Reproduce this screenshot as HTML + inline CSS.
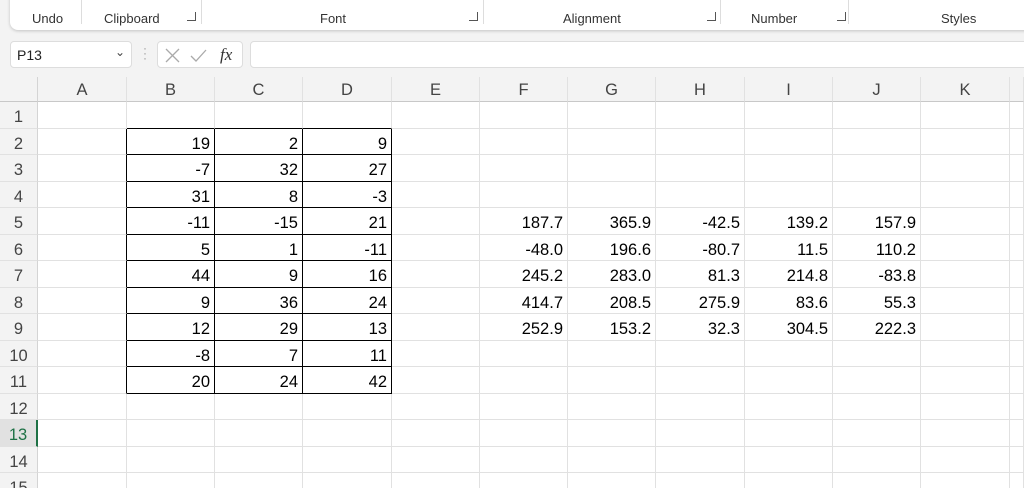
<!DOCTYPE html><html><head><style>
*{margin:0;padding:0;box-sizing:border-box}
html,body{width:1024px;height:488px;overflow:hidden}
body{background:#f3f3f3;font-family:"Liberation Sans",sans-serif;position:relative}
.rib{position:absolute;left:10px;top:-10px;width:1030px;height:40px;background:#fff;border-radius:8px;box-shadow:0 1px 3px rgba(0,0,0,.2)}
.rl{position:absolute;top:11px;font-size:13px;color:#333}
.sep{position:absolute;top:0;width:1px;height:24px;background:#ddd}
.dl{position:absolute;top:12px;width:9px;height:9px;border:1px solid #555;border-top:none;border-left:none}
.box{position:absolute;background:#fff;border:1px solid #ddd;border-radius:4px}
.sheet{position:absolute;left:0;top:77px;width:1024px;height:411px;background:#fff;overflow:hidden}
.row{position:absolute;left:0;width:1024px;display:grid;grid-template-columns:38px 89px 88px 88px 89px 88px 88px 88px 89px 88px 88px 89px 14px}
.row div{border-right:1px solid #e1e1e1;border-bottom:1px solid #e1e1e1;font-size:16.5px;text-align:right;padding-right:4px;color:#000;white-space:nowrap;overflow:hidden;line-height:30px}
.row div:first-child{background:#f3f3f3;text-align:center;padding:0;color:#444;border-right:1px solid #d4d4d4}
.hd div{background:#f3f3f3;text-align:center!important;color:#444;padding:0!important;border-bottom:1px solid #c8c8c8!important;line-height:26px!important}
.b{border-right:1px solid #000!important;border-bottom:1px solid #000!important}
.bt{border-bottom:1px solid #000!important}
.br{border-right:1px solid #000!important}
</style></head><body>
<div class="rib">
<div class="rl" style="left:22px;top:21px">Undo</div>
<div class="sep" style="left:71px;top:10px"></div>
<div class="rl" style="left:94px;top:21px">Clipboard</div>
<div class="dl" style="left:177px;top:22px"></div>
<div class="sep" style="left:191px;top:10px"></div>
<div class="rl" style="left:310px;top:21px">Font</div>
<div class="dl" style="left:459px;top:22px"></div>
<div class="sep" style="left:473px;top:10px"></div>
<div class="rl" style="left:553px;top:21px">Alignment</div>
<div class="dl" style="left:697px;top:22px"></div>
<div class="sep" style="left:710px;top:10px"></div>
<div class="rl" style="left:741px;top:21px">Number</div>
<div class="dl" style="left:827px;top:22px"></div>
<div class="sep" style="left:838px;top:10px"></div>
<div class="rl" style="left:931px;top:21px">Styles</div>
</div>
<div class="box" style="left:10px;top:41px;width:122px;height:27px"><span style="position:absolute;left:6px;top:5px;font-size:14px;color:#222">P13</span><span style="position:absolute;right:6px;top:3px;font-size:12px;color:#444">&#8964;</span></div>
<div style="position:absolute;left:143px;top:46px;width:2px;height:16px;color:#999;font-size:12px;line-height:5px">·<br>·<br>·</div>
<div class="box" style="left:157px;top:41px;width:86px;height:27px">
<svg width="86" height="27" style="position:absolute;left:0;top:0"><path d="M8 7l13 13M21 7L8 20" stroke="#aaa" stroke-width="1.3" fill="none"/><path d="M33 14l5 5 10-11" stroke="#aaa" stroke-width="1.3" fill="none"/></svg>
<span style="position:absolute;left:62px;top:3px;font-family:'Liberation Serif',serif;font-style:italic;font-size:17px;color:#333">fx</span></div>
<div class="box" style="left:250px;top:41px;width:790px;height:27px"></div>
<div class="sheet">
<div class="row hd" style="top:0;height:25px"><div></div><div>A</div><div>B</div><div>C</div><div>D</div><div>E</div><div>F</div><div>G</div><div>H</div><div>I</div><div>J</div><div>K</div><div></div></div>
<div class="row" style="top:25px;height:26.5px"><div>1</div><div></div><div class="bt"></div><div class="bt"></div><div class="bt"></div><div></div><div></div><div></div><div></div><div></div><div></div><div></div><div></div></div>
<div class="row" style="top:51.5px;height:26.5px"><div>2</div><div class="br"></div><div class="b">19</div><div class="b">2</div><div class="b">9</div><div></div><div></div><div></div><div></div><div></div><div></div><div></div><div></div></div>
<div class="row" style="top:78px;height:26.5px"><div>3</div><div class="br"></div><div class="b">-7</div><div class="b">32</div><div class="b">27</div><div></div><div></div><div></div><div></div><div></div><div></div><div></div><div></div></div>
<div class="row" style="top:104.5px;height:26.5px"><div>4</div><div class="br"></div><div class="b">31</div><div class="b">8</div><div class="b">-3</div><div></div><div></div><div></div><div></div><div></div><div></div><div></div><div></div></div>
<div class="row" style="top:131px;height:26.5px"><div>5</div><div class="br"></div><div class="b">-11</div><div class="b">-15</div><div class="b">21</div><div></div><div>187.7</div><div>365.9</div><div>-42.5</div><div>139.2</div><div>157.9</div><div></div><div></div></div>
<div class="row" style="top:157.5px;height:26.5px"><div>6</div><div class="br"></div><div class="b">5</div><div class="b">1</div><div class="b">-11</div><div></div><div>-48.0</div><div>196.6</div><div>-80.7</div><div>11.5</div><div>110.2</div><div></div><div></div></div>
<div class="row" style="top:184px;height:26.5px"><div>7</div><div class="br"></div><div class="b">44</div><div class="b">9</div><div class="b">16</div><div></div><div>245.2</div><div>283.0</div><div>81.3</div><div>214.8</div><div>-83.8</div><div></div><div></div></div>
<div class="row" style="top:210.5px;height:26.5px"><div>8</div><div class="br"></div><div class="b">9</div><div class="b">36</div><div class="b">24</div><div></div><div>414.7</div><div>208.5</div><div>275.9</div><div>83.6</div><div>55.3</div><div></div><div></div></div>
<div class="row" style="top:237px;height:26.5px"><div>9</div><div class="br"></div><div class="b">12</div><div class="b">29</div><div class="b">13</div><div></div><div>252.9</div><div>153.2</div><div>32.3</div><div>304.5</div><div>222.3</div><div></div><div></div></div>
<div class="row" style="top:263.5px;height:26.5px"><div>10</div><div class="br"></div><div class="b">-8</div><div class="b">7</div><div class="b">11</div><div></div><div></div><div></div><div></div><div></div><div></div><div></div><div></div></div>
<div class="row" style="top:290px;height:26.5px"><div>11</div><div class="br"></div><div class="b">20</div><div class="b">24</div><div class="b">42</div><div></div><div></div><div></div><div></div><div></div><div></div><div></div><div></div></div>
<div class="row" style="top:316.5px;height:26.5px"><div>12</div><div></div><div></div><div></div><div></div><div></div><div></div><div></div><div></div><div></div><div></div><div></div><div></div></div>
<div class="row" style="top:343px;height:26.5px"><div style="background:#e1e1e1;color:#1e7145;border-right:2px solid #1e7145">13</div><div></div><div></div><div></div><div></div><div></div><div></div><div></div><div></div><div></div><div></div><div></div><div></div></div>
<div class="row" style="top:369.5px;height:26.5px"><div>14</div><div></div><div></div><div></div><div></div><div></div><div></div><div></div><div></div><div></div><div></div><div></div><div></div></div>
<div class="row" style="top:396px;height:26.5px"><div>15</div><div></div><div></div><div></div><div></div><div></div><div></div><div></div><div></div><div></div><div></div><div></div><div></div></div>
</div>
</body></html>
